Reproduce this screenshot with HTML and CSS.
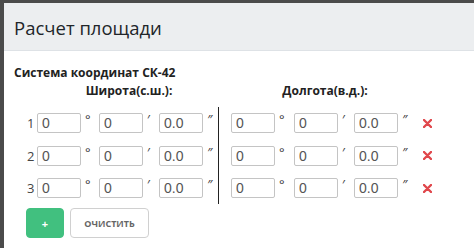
FILE: index.html
```html
<!DOCTYPE html>
<html lang="ru">
<head>
    <meta charset="UTF-8">
    <meta name="viewport" content="width=device-width, initial-scale=1.0">
    <link rel="stylesheet" href="styles.css">
    <title>Расчет площади</title>
</head>
<body>

<div class="modal">
    <div class="modal-header">
        <h2>Расчет площади</h2>
    </div>
    <div class="modal-body">
        <div class="system">Система координат СК-42</div>
        <div class="heads">
            <div class="head head-lat">Широта(с.ш.):</div>
            <div class="head head-lon">Долгота(в.д.):</div>
        </div>
        <div class="coords">
            <div class="col col-lat">
                <div class="row"><span class="num">1</span><input value="0"><span class="sym deg">°</span><input value="0"><span class="sym min">′</span><input value="0.0"><span class="sym sec">″</span></div>
                <div class="row"><span class="num">2</span><input value="0"><span class="sym deg">°</span><input value="0"><span class="sym min">′</span><input value="0.0"><span class="sym sec">″</span></div>
                <div class="row"><span class="num">3</span><input value="0"><span class="sym deg">°</span><input value="0"><span class="sym min">′</span><input value="0.0"><span class="sym sec">″</span></div>
            </div>
            <div class="col col-lon">
                <div class="row"><input value="0"><span class="sym deg">°</span><input value="0"><span class="sym min">′</span><input value="0.0"><span class="sym sec">″</span><span class="remove"><svg width="9" height="9" viewBox="0 0 9 9"><path d="M1 1L8 8M8 1L1 8" stroke="#e0474c" stroke-width="2.4" stroke-linecap="round"/></svg></span></div>
                <div class="row"><input value="0"><span class="sym deg">°</span><input value="0"><span class="sym min">′</span><input value="0.0"><span class="sym sec">″</span><span class="remove"><svg width="9" height="9" viewBox="0 0 9 9"><path d="M1 1L8 8M8 1L1 8" stroke="#e0474c" stroke-width="2.4" stroke-linecap="round"/></svg></span></div>
                <div class="row"><input value="0"><span class="sym deg">°</span><input value="0"><span class="sym min">′</span><input value="0.0"><span class="sym sec">″</span><span class="remove"><svg width="9" height="9" viewBox="0 0 9 9"><path d="M1 1L8 8M8 1L1 8" stroke="#e0474c" stroke-width="2.4" stroke-linecap="round"/></svg></span></div>
            </div>
        </div>
        <div class="actions">
            <button class="btn btn-add">+</button>
            <button class="btn btn-clear">очистить</button>
        </div>
    </div>
</div>

</body>
</html>
```

FILE: styles.css
```css
body {
    margin: 0;
    background: #4b4b4b;
    font-family: 'Open Sans', sans-serif;
    color: #222;
    overflow: hidden;
}

.modal {
    margin: 3px 0 0 4px;
    background: #fff;
    height: 245px;
}

.modal-header {
    background: #eceef0;
    height: 47px;
    border-bottom: 1px solid #dee2e6;
    display: flex;
    align-items: center;
    padding-left: 10px;
}

.modal-header h2 {
    margin: 0;
    font-size: 18.5px;
    font-weight: 400;
    color: #212529;
    padding-top: 2px;
}

.modal-body {
    padding: 13px 0 0 10px;
}

.system {
    font-size: 12px;
    font-weight: 700;
    line-height: 18px;
}

.heads {
    display: flex;
    font-size: 12px;
    font-weight: 700;
    line-height: 18px;
}

.head-lat {
    width: 230px;
    text-align: center;
}

.head-lon {
    width: 162px;
    text-align: center;
}

.coords {
    display: flex;
    margin-top: 7px;
}

.col {
    padding: 6px 0;
}

.col-lat {
    padding-left: 13px;
    border-right: 1px solid #222;
}

.col-lon {
    padding-left: 12px;
}

.row {
    display: flex;
    height: 20px;
    margin-bottom: 12.5px;
}

.row:last-child {
    margin-bottom: 0;
}

.num {
    width: 10px;
    font-size: 13px;
    color: #444;
    line-height: 20px;
}

input {
    box-sizing: border-box;
    width: 44px;
    height: 20px;
    border: 1px solid #c4c4c4;
    border-radius: 2px;
    padding: 0 4px;
    font-family: 'Liberation Sans', sans-serif;
    font-size: 14px;
    color: #555;
}

.sym {
    font-size: 13px;
    color: #333;
    line-height: 13px;
    padding-left: 4px;
}

.deg {
    width: 14px;
}

.min {
    width: 12px;
}

.sec {
    width: 11px;
    font-style: italic;
}

.col-lon .deg {
    width: 15px;
}

.col-lon .sec {
    width: 10px;
}

.remove {
    display: flex;
    align-items: center;
    padding-left: 11px;
    height: 20px;
}

.actions {
    display: flex;
    gap: 6px;
    margin: 4px 0 0 12px;
}

.btn {
    height: 30px;
    border-radius: 4px;
    font-family: 'Open Sans', sans-serif;
    cursor: pointer;
}

.btn-add {
    width: 38px;
    background: #41c07f;
    border: 1px solid #41c07f;
    color: #fff;
    font-size: 11px;
    font-weight: 700;
}

.btn-clear {
    width: 79px;
    background: #fff;
    border: 1px solid #d0d0d0;
    color: #666;
    font-size: 9px;
    font-weight: 700;
    text-transform: uppercase;
}
```
